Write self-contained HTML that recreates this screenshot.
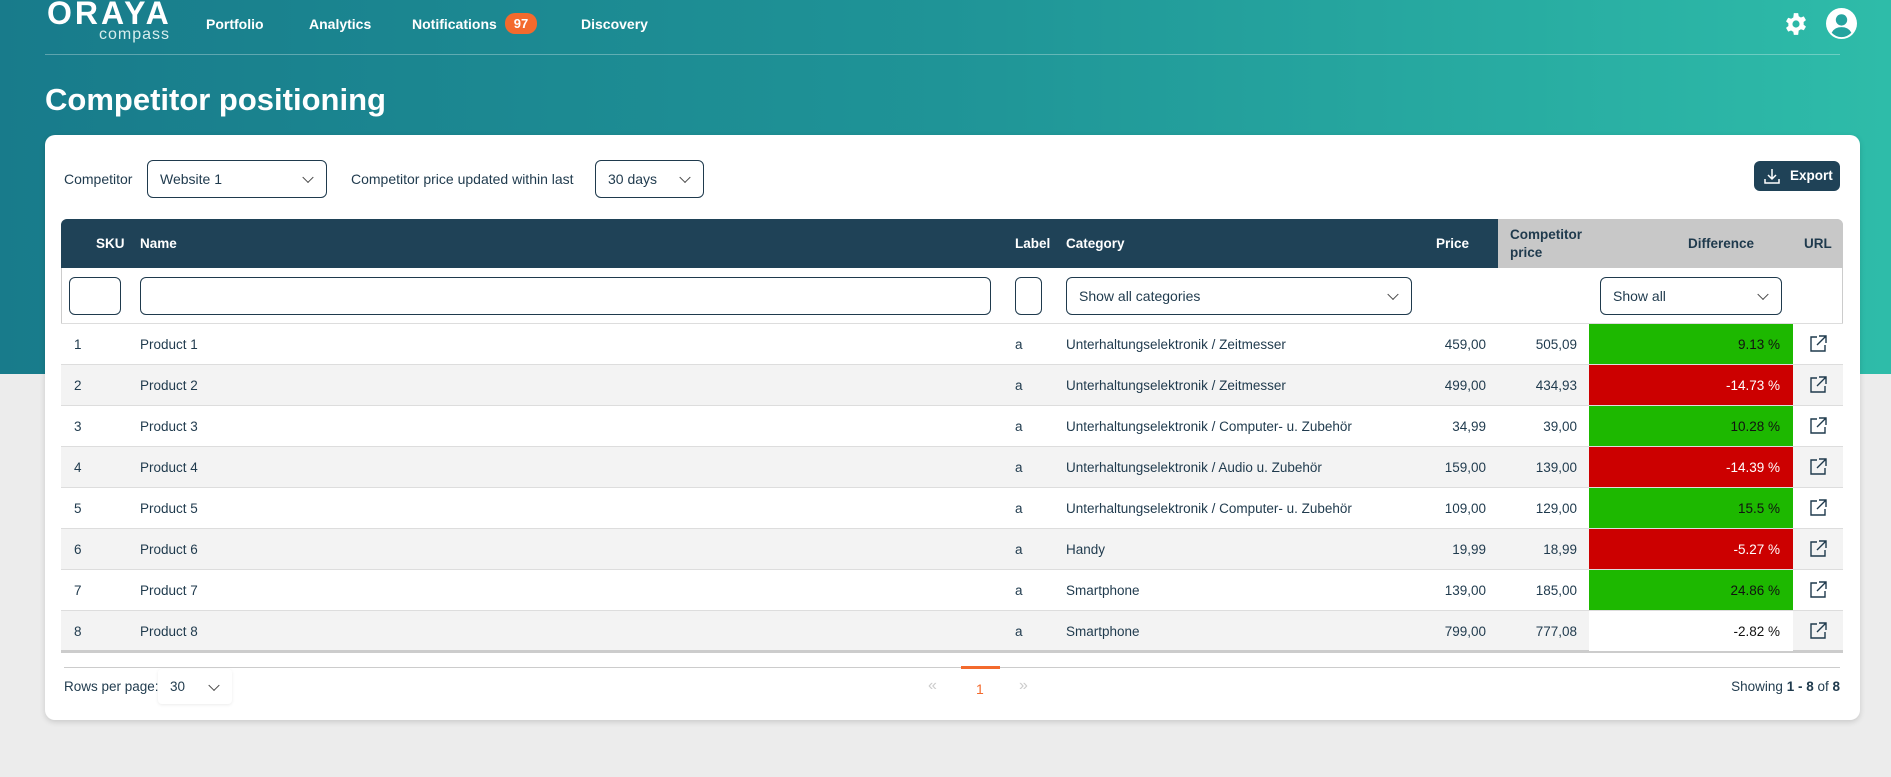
<!DOCTYPE html>
<html><head><meta charset="utf-8"><style>
*{box-sizing:border-box;margin:0;padding:0}
body{width:1891px;height:777px;background:#ececec;font-family:"Liberation Sans",sans-serif;color:#1f3a4d;position:relative;overflow:hidden}
.hdr{position:absolute;left:0;top:0;width:1891px;height:374px;background:linear-gradient(90deg,#187b8b 0%,#1f9497 50%,#2ebca9 100%)}
.a{position:absolute}
.nav{color:#fff;font-weight:bold;font-size:14px;top:16px}
.card{left:45px;top:135px;width:1815px;height:585px;background:#fff;border-radius:10px;box-shadow:0 2px 6px rgba(0,0,0,.15)}
.sel{border:1px solid #1f3a4d;border-radius:6px;background:#fff;font-size:14px;padding-left:12px;display:flex;align-items:center}
.chev{position:absolute;right:14px;top:50%;width:8px;height:8px;border-right:1.5px solid #444;border-bottom:1.5px solid #444;transform:translateY(-70%) rotate(45deg)}
.th{font-weight:bold;font-size:13.5px;color:#fff}
.row{position:absolute;left:61px;width:1782px;height:41px;border-bottom:1px solid #ddd;font-size:13.5px}
.row div{position:absolute;top:13px}
.r{text-align:right}
</style></head><body>
<div class="hdr"></div>
<div class="a" style="left:47px;top:-5px;color:#fff;font-weight:bold;font-size:32px;letter-spacing:3px">ORAYA</div>
<div class="a" style="left:99px;top:26px;color:#d8eeee;font-size:16px;letter-spacing:1px">compass</div>
<div class="a nav" style="left:206px">Portfolio</div>
<div class="a nav" style="left:309px">Analytics</div>
<div class="a nav" style="left:412px">Notifications</div>
<div class="a" style="left:505px;top:13px;width:32px;height:21px;border-radius:10px;background:#f36a2d;color:#fff;font-weight:bold;font-size:13px;text-align:center;line-height:21px">97</div>
<div class="a nav" style="left:581px">Discovery</div>
<svg class="a" style="left:1783px;top:11px" width="26" height="26" viewBox="0 0 24 24"><path fill="#fff" fill-rule="evenodd" d="M10 2h4l.5 2.8a7.5 7.5 0 0 1 2 1.2l2.7-1 2 3.4-2.2 1.8a7.5 7.5 0 0 1 0 2.4l2.2 1.8-2 3.4-2.7-1a7.5 7.5 0 0 1-2 1.2L14 22h-4l-.5-2.8a7.5 7.5 0 0 1-2-1.2l-2.7 1-2-3.4L5 13.8a7.5 7.5 0 0 1 0-2.4L2.8 9.6l2-3.4 2.7 1a7.5 7.5 0 0 1 2-1.2zM12 8.7a3.3 3.3 0 1 0 0 6.6 3.3 3.3 0 0 0 0-6.6z"/></svg>
<svg class="a" style="left:1826px;top:8px" width="31" height="31" viewBox="0 0 30 30"><circle cx="15" cy="15" r="15" fill="#fff"/><circle cx="15" cy="11.5" r="5.5" fill="#25a39f"/><path d="M5.5 24c2-4 5.5-5.5 9.5-5.5s7.5 1.5 9.5 5.5a13 13 0 0 1-19 0z" fill="#25a39f"/></svg>
<div class="a" style="left:45px;top:54px;width:1795px;height:1px;background:rgba(255,255,255,.3)"></div>
<div class="a" style="left:45px;top:82px;color:#fff;font-weight:bold;font-size:31px">Competitor positioning</div>

<div class="a card"></div>
<div class="a" style="left:64px;top:171px;font-size:14px">Competitor</div>
<div class="a sel" style="left:147px;top:160px;width:180px;height:38px">Website 1<span class="chev"></span></div>
<div class="a" style="left:351px;top:171px;font-size:14px">Competitor price updated within last</div>
<div class="a sel" style="left:595px;top:160px;width:109px;height:38px">30 days<span class="chev"></span></div>
<div class="a" style="left:1754px;top:161px;width:86px;height:30px;background:#1f4257;border-radius:6px;color:#fff;font-weight:bold;font-size:13.5px;line-height:30px;padding-left:36px">Export</div>
<svg class="a" style="left:1763px;top:167px" width="18" height="18" viewBox="0 0 18 18" fill="none" stroke="#fff" stroke-width="1.5"><path d="M9 2v10M5 8l4 4 4-4M2 12v4h14v-4"/></svg>

<div class="a" style="left:61px;top:219px;width:1782px;height:434px;border:1px solid #ccc;border-radius:6px 6px 0 0"></div>
<div class="a" style="left:61px;top:219px;width:1437px;height:49px;background:#1f4257;border-radius:6px 0 0 0"></div>
<div class="a" style="left:1498px;top:219px;width:345px;height:49px;background:#c8c8c8;border-radius:0 6px 0 0"></div>
<div class="a th" style="left:96px;top:236px">SKU</div>
<div class="a th" style="left:140px;top:236px">Name</div>
<div class="a th" style="left:1015px;top:236px">Label</div>
<div class="a th" style="left:1066px;top:236px">Category</div>
<div class="a th" style="left:1436px;top:236px">Price</div>
<div class="a th" style="left:1510px;top:226px;color:#1f3a4d;line-height:18px">Competitor<br>price</div>
<div class="a th" style="left:1688px;top:236px;color:#1f3a4d">Difference</div>
<div class="a th" style="left:1804px;top:236px;color:#1f3a4d">URL</div>

<div class="a sel" style="left:69px;top:277px;width:52px;height:38px"></div>
<div class="a sel" style="left:140px;top:277px;width:851px;height:38px"></div>
<div class="a sel" style="left:1015px;top:277px;width:27px;height:38px"></div>
<div class="a sel" style="left:1066px;top:277px;width:346px;height:38px">Show all categories<span class="chev"></span></div>
<div class="a sel" style="left:1600px;top:277px;width:182px;height:38px">Show all<span class="chev"></span></div>
<div class="a" style="left:61px;top:323px;width:1782px;height:1px;background:#ddd"></div>

<div class="row" style="top:324px;background:#fff"><div style="left:13px">1</div><div style="left:79px">Product 1</div><div style="left:954px">a</div><div style="left:1005px">Unterhaltungselektronik / Zeitmesser</div><div class="r" style="right:357px">459,00</div><div class="r" style="right:266px">505,09</div><span style="position:absolute;left:1528px;top:0;width:204px;height:40px;background:#1db800"></span><div class="r" style="right:63px;color:#111">9.13 %</div></div>
<div class="row" style="top:365px;background:#f3f3f3"><div style="left:13px">2</div><div style="left:79px">Product 2</div><div style="left:954px">a</div><div style="left:1005px">Unterhaltungselektronik / Zeitmesser</div><div class="r" style="right:357px">499,00</div><div class="r" style="right:266px">434,93</div><span style="position:absolute;left:1528px;top:0;width:204px;height:40px;background:#cc0000"></span><div class="r" style="right:63px;color:#fff">-14.73 %</div></div>
<div class="row" style="top:406px;background:#fff"><div style="left:13px">3</div><div style="left:79px">Product 3</div><div style="left:954px">a</div><div style="left:1005px">Unterhaltungselektronik / Computer- u. Zubehör</div><div class="r" style="right:357px">34,99</div><div class="r" style="right:266px">39,00</div><span style="position:absolute;left:1528px;top:0;width:204px;height:40px;background:#1db800"></span><div class="r" style="right:63px;color:#111">10.28 %</div></div>
<div class="row" style="top:447px;background:#f3f3f3"><div style="left:13px">4</div><div style="left:79px">Product 4</div><div style="left:954px">a</div><div style="left:1005px">Unterhaltungselektronik / Audio u. Zubehör</div><div class="r" style="right:357px">159,00</div><div class="r" style="right:266px">139,00</div><span style="position:absolute;left:1528px;top:0;width:204px;height:40px;background:#cc0000"></span><div class="r" style="right:63px;color:#fff">-14.39 %</div></div>
<div class="row" style="top:488px;background:#fff"><div style="left:13px">5</div><div style="left:79px">Product 5</div><div style="left:954px">a</div><div style="left:1005px">Unterhaltungselektronik / Computer- u. Zubehör</div><div class="r" style="right:357px">109,00</div><div class="r" style="right:266px">129,00</div><span style="position:absolute;left:1528px;top:0;width:204px;height:40px;background:#1db800"></span><div class="r" style="right:63px;color:#111">15.5 %</div></div>
<div class="row" style="top:529px;background:#f3f3f3"><div style="left:13px">6</div><div style="left:79px">Product 6</div><div style="left:954px">a</div><div style="left:1005px">Handy</div><div class="r" style="right:357px">19,99</div><div class="r" style="right:266px">18,99</div><span style="position:absolute;left:1528px;top:0;width:204px;height:40px;background:#cc0000"></span><div class="r" style="right:63px;color:#fff">-5.27 %</div></div>
<div class="row" style="top:570px;background:#fff"><div style="left:13px">7</div><div style="left:79px">Product 7</div><div style="left:954px">a</div><div style="left:1005px">Smartphone</div><div class="r" style="right:357px">139,00</div><div class="r" style="right:266px">185,00</div><span style="position:absolute;left:1528px;top:0;width:204px;height:40px;background:#1db800"></span><div class="r" style="right:63px;color:#111">24.86 %</div></div>
<div class="row" style="top:611px;background:#f3f3f3;border-bottom:2px solid #ccc"><div style="left:13px">8</div><div style="left:79px">Product 8</div><div style="left:954px">a</div><div style="left:1005px">Smartphone</div><div class="r" style="right:357px">799,00</div><div class="r" style="right:266px">777,08</div><span style="position:absolute;left:1528px;top:0;width:204px;height:40px;background:#fff"></span><div class="r" style="right:63px;color:#111">-2.82 %</div></div>

<svg class="a" style="left:1808px;top:334px" width="20" height="320" viewBox="0 0 20 320" fill="none" stroke="#1f3a4d" stroke-width="1.4">
<g id="u"><path d="M9 3H3v14h14v-6M11 2h7v7M18 2l-9 9"/></g>
<use href="#u" y="41"/><use href="#u" y="82"/><use href="#u" y="123"/><use href="#u" y="164"/><use href="#u" y="205"/><use href="#u" y="246"/><use href="#u" y="287"/></svg>

<div class="a" style="left:64px;top:667px;width:1776px;height:1px;background:#ccc"></div>
<div class="a" style="left:961px;top:666px;width:39px;height:3px;background:#f36a2d"></div>
<div class="a" style="left:64px;top:679px;font-size:13.5px">Rows per page:</div>
<div class="a" style="left:158px;top:669px;width:74px;height:35px;border-radius:4px;box-shadow:0 1px 3px rgba(0,0,0,.08);font-size:13.5px;padding:10px 0 0 12px">30<span class="chev" style="right:14px"></span></div>
<div class="a" style="left:928px;top:677px;color:#ccc;font-size:16px">«</div>
<div class="a" style="left:976px;top:681px;color:#f36a2d;font-size:14px">1</div>
<div class="a" style="left:1019px;top:677px;color:#ccc;font-size:16px">»</div>
<div class="a" style="right:51px;top:679px;font-size:13.5px">Showing <b>1 - 8</b> of <b>8</b></div>
</body></html>
